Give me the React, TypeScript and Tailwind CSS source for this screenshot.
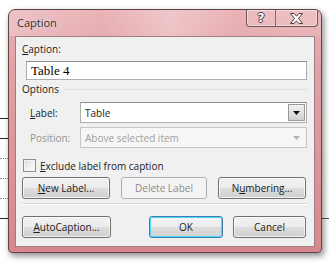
import React from "react";

function Btn({
  children,
  w,
  disabled,
  focused,
  className = "",
}: {
  children: React.ReactNode;
  w: string;
  disabled?: boolean;
  focused?: boolean;
  className?: string;
}) {
  if (disabled) {
    return (
      <div
        className={`${w} h-[22px] rounded-[3px] border border-[#adb2b5] bg-[#f4f4f4] flex items-center justify-center text-[#8b8b8b] ${className}`}
      >
        {children}
      </div>
    );
  }
  if (focused) {
    return (
      <div
        className={`${w} h-[22px] rounded-[3px] border border-[#3c7fb1] bg-[linear-gradient(180deg,#f4f4f4_0%,#ececec_48%,#dcdcdc_52%,#d2d2d2_100%)] shadow-[inset_0_0_0_1px_#48d6fb] flex items-center justify-center ${className}`}
      >
        {children}
      </div>
    );
  }
  return (
    <div
      className={`${w} h-[22px] rounded-[3px] border border-[#707070] bg-[linear-gradient(180deg,#f2f2f2_0%,#ebebeb_48%,#dddddd_52%,#cfcfcf_100%)] shadow-[inset_0_0_0_1px_rgba(255,255,255,0.7)] flex items-center justify-center ${className}`}
    >
      {children}
    </div>
  );
}

export default function App() {
  return (
    <div className="relative w-[329px] h-[266px] bg-white overflow-hidden font-['Open_Sans',sans-serif] text-[10px] leading-[14px] text-[#1b1b1b]">
      {/* document lines behind the dialog */}
      <div className="absolute left-0 top-[118px] w-[8px] h-px bg-[#222]" />
      <div className="absolute left-0 top-[138px] w-[8px] h-px bg-[#222]" />
      <div className="absolute left-0 top-[158px] w-[8px] h-px border-t border-dotted border-[#7f93b8]" />
      <div className="absolute left-0 top-[178px] w-[8px] h-px border-t border-dotted border-[#7f93b8]" />
      <div className="absolute left-0 top-[198px] w-[8px] h-px border-t border-dotted border-[#7f93b8]" />
      <div className="absolute left-0 top-[218px] w-[8px] h-px bg-[#222]" />
      <div className="absolute right-0 top-[218px] w-[7px] h-px bg-[#555]" />

      <div className="relative pl-[8px] pt-[9px]">
        <div className="w-[314px] h-[244px] rounded-t-[7px] rounded-b-[4px] border border-[#5e4647] bg-[linear-gradient(180deg,#e9b2b6_0%,#e2a1a6_25%,#d8878e_100%)] shadow-[2px_3px_6px_rgba(0,0,0,0.45)] flex flex-col overflow-hidden">
          {/* title bar */}
          <div className="h-[26px] flex items-start bg-[linear-gradient(90deg,rgba(255,255,255,0.22)_0%,rgba(255,255,255,0.02)_30%,rgba(255,255,255,0.28)_52%,rgba(255,255,255,0.02)_72%,rgba(255,255,255,0.1)_100%)]">
            <div className="pl-[8px] pt-[6px] text-[11px] leading-[14px] text-[#333] [text-shadow:0_0_6px_rgba(255,255,255,0.8)]">
              Caption
            </div>
            <div className="ml-auto mr-[3px] flex h-[17px] rounded-b-[4px] border-x border-b border-[#6e5456] shadow-[inset_0_0_0_1px_rgba(255,255,255,0.45)] bg-[rgba(255,255,255,0.12)]">
              <div className="w-[28px] flex items-center justify-center text-white font-['DejaVu_Sans',sans-serif] font-bold text-[12px] leading-[12px] [text-shadow:1px_0_#4d3b3c,-1px_0_#4d3b3c,0_1px_#4d3b3c,0_-1px_#4d3b3c]">
                ?
              </div>
              <div className="w-[42px] border-l border-[#8a6a6c] flex items-center justify-center">
                <svg width="15" height="11" viewBox="0 0 15 11">
                  <path
                    d="M1.5 0.5 H5 L7.5 3.2 L10 0.5 H13.5 L9.5 5.5 L13.5 10.5 H10 L7.5 7.8 L5 10.5 H1.5 L5.5 5.5 Z"
                    fill="#ffffff"
                    stroke="#4d3b3c"
                    strokeWidth="1"
                    strokeLinejoin="round"
                  />
                </svg>
              </div>
            </div>
          </div>

          {/* client area */}
          <div className="mx-[6px] h-[211px] border border-[#9c7f81] bg-[#f0f0f0] flex flex-col">
            <div className="mt-[5px] pl-[6px] h-[14px]">
              <span className="underline underline-offset-1">C</span>aption:
            </div>
            <div className="mt-[5px] ml-[10px] w-[281px] h-[19px] border border-[#abadb3] border-t-[#8a8d94] bg-white flex items-center pl-[4px] font-['Liberation_Serif',serif] text-[13px] text-black">
              Table 4
            </div>
            <div className="mt-[2px] pl-[6px] pr-[7px] h-[14px] flex items-center">
              <span>Options</span>
              <div className="ml-[4px] flex-1 h-px bg-[#d5dfe5]" />
            </div>
            <div className="mt-[6px] pl-[14px] h-[21px] flex items-center">
              <div className="w-[50px]">
                <span className="underline underline-offset-1">L</span>abel:
              </div>
              <div className="w-[227px] h-[21px] border border-[#acacac] border-t-[#8e8e8e] bg-white flex items-center">
                <span className="pl-[4px] flex-1">Table</span>
                <div className="w-[17px] h-[17px] mr-px border border-[#9a9a9a] bg-[linear-gradient(180deg,#f0f0f0_0%,#e2e2e2_50%,#cfcfcf_100%)] flex items-center justify-center">
                  <svg width="7" height="4" viewBox="0 0 7 4">
                    <path d="M0 0 H7 L3.5 4 Z" fill="#111" />
                  </svg>
                </div>
              </div>
            </div>
            <div className="mt-[4px] pl-[14px] h-[21px] flex items-center text-[#939393]">
              <div className="w-[50px]">Position:</div>
              <div className="w-[227px] h-[21px] border border-[#c6c6c6] bg-[#f6f6f6] flex items-center">
                <span className="pl-[4px] flex-1 text-[#a0a0a0]">Above selected item</span>
                <div className="w-[17px] h-[17px] mr-px flex items-center justify-center">
                  <svg width="7" height="4" viewBox="0 0 7 4">
                    <path d="M0 0 H7 L3.5 4 Z" fill="#b4b4b4" />
                  </svg>
                </div>
              </div>
            </div>
            <div className="mt-[11px] pl-[7px] h-[13px] flex items-center gap-[4px]">
              <div className="w-[13px] h-[13px] border border-[#8f8f8f] bg-[linear-gradient(135deg,#d8d8d8_0%,#f2f2f2_60%,#ffffff_100%)] shadow-[inset_0_0_0_1px_#f4f4f4]" />
              <div>
                <span className="underline underline-offset-1">E</span>xclude label from caption
              </div>
            </div>
            <div className="mt-[5px] pl-[6px] flex">
              <Btn w="w-[88px]">
                <span>
                  <span className="underline underline-offset-1">N</span>ew Label...
                </span>
              </Btn>
              <Btn w="w-[86px]" disabled className="ml-[11px]">
                Delete Label
              </Btn>
              <Btn w="w-[88px]" className="ml-[11px]">
                <span>
                  N<span className="underline underline-offset-1">u</span>mbering...
                </span>
              </Btn>
            </div>
            <div className="mt-[4px] ml-[6px] w-[285px] h-[2px] border-t border-[#d6d6d6] border-b border-b-white" />
            <div className="mt-[11px] pl-[6px] flex">
              <Btn w="w-[89px]">
                <span>
                  <span className="underline underline-offset-1">A</span>utoCaption...
                </span>
              </Btn>
              <Btn w="w-[74px]" focused className="ml-[38px]">
                OK
              </Btn>
              <Btn w="w-[73px]" className="ml-[10px]">
                Cancel
              </Btn>
            </div>
          </div>
        </div>
      </div>
    </div>
  );
}
